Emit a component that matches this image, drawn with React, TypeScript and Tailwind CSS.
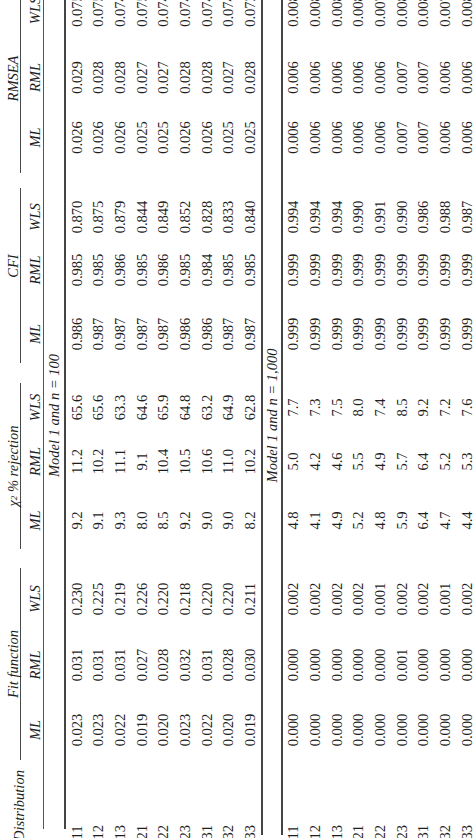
import React from "react";

// column widths of the (unrotated) table, gaps between the groups included
const COLS = [
  "w-[79px]",
  "w-[64px]",
  "w-[66px]",
  "w-[66px]",
  "w-[15px]",
  "w-[61px]",
  "w-[57px]",
  "w-[51px]",
  "w-[18px]",
  "w-[60px]",
  "w-[68px]",
  "w-[38px]",
  "w-[30px]",
  "w-[61px]",
  "w-[59px]",
  "w-[75px]",
];

type Row = [string, string[], string[], string[], string[]];

const SMALL: Row[] = [
  ["11", ["0.023", "0.031", "0.230"], ["9.2", "11.2", "65.6"], ["0.986", "0.985", "0.870"], ["0.026", "0.029", "0.075"]],
  ["12", ["0.023", "0.031", "0.225"], ["9.1", "10.2", "65.6"], ["0.987", "0.985", "0.875"], ["0.026", "0.028", "0.075"]],
  ["13", ["0.022", "0.031", "0.219"], ["9.3", "11.1", "63.3"], ["0.987", "0.986", "0.879"], ["0.026", "0.028", "0.074"]],
  ["21", ["0.019", "0.027", "0.226"], ["8.0", "9.1", "64.6"], ["0.987", "0.985", "0.844"], ["0.025", "0.027", "0.075"]],
  ["22", ["0.020", "0.028", "0.220"], ["8.5", "10.4", "65.9"], ["0.987", "0.986", "0.849"], ["0.025", "0.027", "0.074"]],
  ["23", ["0.023", "0.032", "0.218"], ["9.2", "10.5", "64.8"], ["0.986", "0.985", "0.852"], ["0.026", "0.028", "0.074"]],
  ["31", ["0.022", "0.031", "0.220"], ["9.0", "10.6", "63.2"], ["0.986", "0.984", "0.828"], ["0.026", "0.028", "0.074"]],
  ["32", ["0.020", "0.028", "0.220"], ["9.0", "11.0", "64.9"], ["0.987", "0.985", "0.833"], ["0.025", "0.027", "0.074"]],
  ["33", ["0.019", "0.030", "0.211"], ["8.2", "10.2", "62.8"], ["0.987", "0.985", "0.840"], ["0.025", "0.028", "0.072"]],
];

const LARGE: Row[] = [
  ["11", ["0.000", "0.000", "0.002"], ["4.8", "5.0", "7.7"], ["0.999", "0.999", "0.994"], ["0.006", "0.006", "0.008"]],
  ["12", ["0.000", "0.000", "0.002"], ["4.1", "4.2", "7.3"], ["0.999", "0.999", "0.994"], ["0.006", "0.006", "0.008"]],
  ["13", ["0.000", "0.000", "0.002"], ["4.9", "4.6", "7.5"], ["0.999", "0.999", "0.994"], ["0.006", "0.006", "0.008"]],
  ["21", ["0.000", "0.000", "0.002"], ["5.2", "5.5", "8.0"], ["0.999", "0.999", "0.990"], ["0.006", "0.006", "0.008"]],
  ["22", ["0.000", "0.000", "0.001"], ["4.8", "4.9", "7.4"], ["0.999", "0.999", "0.991"], ["0.006", "0.006", "0.007"]],
  ["23", ["0.000", "0.001", "0.002"], ["5.9", "5.7", "8.5"], ["0.999", "0.999", "0.990"], ["0.007", "0.007", "0.008"]],
  ["31", ["0.000", "0.000", "0.002"], ["6.4", "6.4", "9.2"], ["0.999", "0.999", "0.986"], ["0.007", "0.007", "0.008"]],
  ["32", ["0.000", "0.000", "0.001"], ["4.7", "5.2", "7.2"], ["0.999", "0.999", "0.988"], ["0.006", "0.006", "0.007"]],
  ["33", ["0.000", "0.000", "0.002"], ["4.4", "5.3", "7.6"], ["0.999", "0.999", "0.987"], ["0.006", "0.006", "0.008"]],
];

const Cells = ({ values, start }: { values: string[]; start: number }) => (
  <>
    {values.map((v, i) => (
      <div key={i} className={`${COLS[start + i]} shrink-0 text-center`}>
        {v}
      </div>
    ))}
  </>
);

const DataRow = ({ row }: { row: Row }) => {
  const [dist, fit, chi, cfi, rmsea] = row;
  return (
    <div className="flex h-[21.67px] items-center leading-[14.5px]">
      <div className={`${COLS[0]} shrink-0 pl-[1.5px]`}>{dist}</div>
      <Cells values={fit} start={1} />
      <div className={`${COLS[4]} shrink-0`} />
      <Cells values={chi} start={5} />
      <div className={`${COLS[8]} shrink-0`} />
      <Cells values={cfi} start={9} />
      <div className={`${COLS[12]} shrink-0`} />
      <Cells values={rmsea} start={13} />
    </div>
  );
};

const SUB = ["ML", "RML", "WLS"];

const Table = () => (
  <div className="w-[880px] text-[14.5px] text-[#1e1e1e] font-['Liberation_Serif','Times_New_Roman',serif]">
    {/* header */}
    <div className="flex h-[43px]">
      <div className={`${COLS[0]} shrink-0 pt-[12px] italic leading-[14.5px]`}>Distribution</div>
      <div className="flex flex-col">
        <div className="flex h-[21px] italic leading-[14.5px]">
          <div className="w-[2px] shrink-0" />
          <div className="w-[192px] shrink-0 flex items-end justify-center border-b border-[#4a4a4a]">
            Fit function
          </div>
          <div className="w-[19px] shrink-0" />
          <div className="w-[166px] shrink-0 flex items-end justify-center border-b border-[#4a4a4a]">
            <span>
              χ<sup className="text-[9px] relative -top-[1px]">2</sup> % rejection
            </span>
          </div>
          <div className="w-[20px] shrink-0" />
          <div className="w-[175px] shrink-0 flex items-end justify-center pl-[19px] border-b border-[#4a4a4a]">
            CFI
          </div>
          <div className="w-[15px] shrink-0" />
          <div className="w-[189px] shrink-0 flex items-end justify-center border-b border-[#4a4a4a]">
            RMSEA
          </div>
        </div>
        <div className="flex h-[22px] items-end pb-[1px] italic leading-[14.5px]">
          <Cells values={SUB} start={1} />
          <div className={`${COLS[4]} shrink-0`} />
          <Cells values={SUB} start={5} />
          <div className={`${COLS[8]} shrink-0`} />
          <Cells values={SUB} start={9} />
          <div className={`${COLS[12]} shrink-0`} />
          <Cells values={SUB} start={13} />
        </div>
      </div>
    </div>
    <div className="ml-[12px] h-px bg-[#555]" />

    <div className="w-[851px] h-[20px] flex items-center justify-center italic leading-[14.5px]">
      Model 1 and n = 100
    </div>
    <div className="ml-[12px] h-[2px] bg-[#444]" />
    {SMALL.map((r) => (
      <DataRow key={"s" + r[0]} row={r} />
    ))}

    <div className="ml-[6px] h-[2px] bg-[#444]" />
    <div className="w-[851px] h-[18px] flex items-center justify-center italic leading-[14.5px]">
      Model 1 and n = 1,000
    </div>
    <div className="ml-[6px] h-[2px] bg-[#444]" />
    {LARGE.map((r) => (
      <DataRow key={"l" + r[0]} row={r} />
    ))}
  </div>
);

export default function App() {
  return (
    <div className="relative w-[474px] h-[838px] overflow-hidden bg-white">
      {/* the page is printed sideways: the table is turned a quarter turn to the left */}
      <div className="absolute left-0 top-0 origin-top-left translate-y-[841px] -rotate-90">
        <Table />
      </div>
    </div>
  );
}
